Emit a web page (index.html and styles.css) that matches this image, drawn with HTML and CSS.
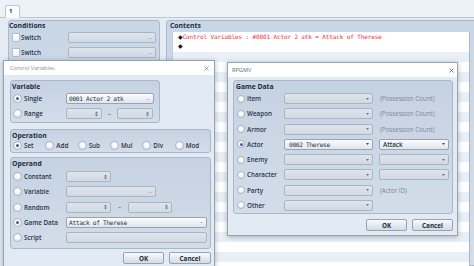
FILE: index.html
```html
<!DOCTYPE html>
<html>
<head>
<meta charset="utf-8">
<link rel="stylesheet" href="styles.css">
</head>
<body>
<div class="tabbar"><div class="tab">1</div></div>
<div class="page">
  <section class="panel conditions">
    <div class="ptitle">Conditions</div>
    <div class="crow"><span class="check"></span><span class="clabel">Switch</span><span class="field w88"><span class="fill"></span><span class="dots">&middot;&middot;&middot;</span></span></div>
    <div class="crow"><span class="check"></span><span class="clabel">Switch</span><span class="field w88"><span class="fill"></span><span class="dots">&middot;&middot;&middot;</span></span></div>
  </section>
  <section class="panel contents">
    <div class="ptitle">Contents</div>
    <div class="list">
      <div class="li"><span class="dia">&#9670;</span><span class="cmd">Control Variables : #0001 Actor 2 atk = Attack of Therese</span></div>
      <div class="li"><span class="dia">&#9670;</span></div>
    </div>
  </section>
</div>

<div class="win cv">
  <div class="wtitle"><span>Control Variables</span><svg class="x" width="5" height="5" viewBox="0 0 5 5"><path d="M0.5 0.5L4.5 4.5M4.5 0.5L0.5 4.5" stroke="#7a8490" stroke-width="0.8"/></svg></div>
  <div class="wbody">
    <div class="grp g-var">
      <div class="gtitle">Variable</div>
      <div class="row"><span class="radio on"></span><span class="lbl">Single</span><span class="field on w88"><span class="mono fill">0001 Actor 2 atk</span><span class="dots">&middot;&middot;&middot;</span></span></div>
      <div class="row"><span class="radio"></span><span class="lbl">Range</span><span class="field spin w36"><span class="fill"></span><svg width="3" height="6" viewBox="0 0 3 6"><path d="M0 2.4L1.5 0.6L3 2.4ZM0 3.6L1.5 5.4L3 3.6Z" fill="#6a7583"/></svg></span><span class="tilde t15">~</span><span class="field spin w36"><span class="fill"></span><svg width="3" height="6" viewBox="0 0 3 6"><path d="M0 2.4L1.5 0.6L3 2.4ZM0 3.6L1.5 5.4L3 3.6Z" fill="#6a7583"/></svg></span></div>
    </div>
    <div class="grp g-op">
      <div class="gtitle">Operation</div>
      <div class="oprow">
        <span class="opt"><span class="radio on"></span>Set</span>
        <span class="opt"><span class="radio"></span>Add</span>
        <span class="opt"><span class="radio"></span>Sub</span>
        <span class="opt"><span class="radio"></span>Mul</span>
        <span class="opt"><span class="radio"></span>Div</span>
        <span class="opt"><span class="radio"></span>Mod</span>
      </div>
    </div>
    <div class="grp g-operand">
      <div class="gtitle t9">Operand</div>
      <div class="row"><span class="radio"></span><span class="lbl">Constant</span><span class="field spin w45"><span class="fill"></span><svg width="3" height="6" viewBox="0 0 3 6"><path d="M0 2.4L1.5 0.6L3 2.4ZM0 3.6L1.5 5.4L3 3.6Z" fill="#6a7583"/></svg></span></div>
      <div class="row"><span class="radio"></span><span class="lbl">Variable</span><span class="field w90"><span class="fill"></span><span class="dots">&middot;&middot;&middot;</span></span></div>
      <div class="row"><span class="radio"></span><span class="lbl">Random</span><span class="field spin w45"><span class="fill"></span><svg width="3" height="6" viewBox="0 0 3 6"><path d="M0 2.4L1.5 0.6L3 2.4ZM0 3.6L1.5 5.4L3 3.6Z" fill="#6a7583"/></svg></span><span class="tilde t17">~</span><span class="field spin w44"><span class="fill"></span><svg width="3" height="6" viewBox="0 0 3 6"><path d="M0 2.4L1.5 0.6L3 2.4ZM0 3.6L1.5 5.4L3 3.6Z" fill="#6a7583"/></svg></span></div>
      <div class="row"><span class="radio on"></span><span class="lbl">Game Data</span><span class="field on w141"><span class="mono fill">Attack of Therese</span><span class="dots">&middot;&middot;&middot;</span></span></div>
      <div class="row"><span class="radio"></span><span class="lbl">Script</span><span class="field w141"><span class="fill"></span></span></div>
    </div>
    <div class="btns"><span class="btn w41">OK</span><span class="btn w42">Cancel</span></div>
  </div>
</div>

<div class="win gd">
  <div class="wtitle"><span>RPGMV</span><svg class="x" width="5" height="5" viewBox="0 0 5 5"><path d="M0.5 0.5L4.5 4.5M4.5 0.5L0.5 4.5" stroke="#555f6b" stroke-width="0.8"/></svg></div>
  <div class="wbody">
    <div class="grp g-gd">
      <div class="gtitle">Game Data</div>
      <div class="row"><span class="radio"></span><span class="lbl l37">Item</span><span class="field combo w89"><span class="fill"></span><svg width="3" height="2" viewBox="0 0 3 2"><path d="M0 0H3L1.5 2Z" fill="#6a7583"/></svg></span><span class="note">(Possession Count)</span></div>
      <div class="row"><span class="radio"></span><span class="lbl l37">Weapon</span><span class="field combo w89"><span class="fill"></span><svg width="3" height="2" viewBox="0 0 3 2"><path d="M0 0H3L1.5 2Z" fill="#6a7583"/></svg></span><span class="note">(Possession Count)</span></div>
      <div class="row"><span class="radio"></span><span class="lbl l37">Armor</span><span class="field combo w89"><span class="fill"></span><svg width="3" height="2" viewBox="0 0 3 2"><path d="M0 0H3L1.5 2Z" fill="#6a7583"/></svg></span><span class="note">(Possession Count)</span></div>
      <div class="row"><span class="radio on"></span><span class="lbl l37">Actor</span><span class="field combo on w89"><span class="mono fill">0002 Therese</span><svg width="3" height="2" viewBox="0 0 3 2"><path d="M0 0H3L1.5 2Z" fill="#3f4956"/></svg></span><span class="field combo on w70 c2"><span class="sel fill">Attack</span><svg width="3" height="2" viewBox="0 0 3 2"><path d="M0 0H3L1.5 2Z" fill="#3f4956"/></svg></span></div>
      <div class="row"><span class="radio"></span><span class="lbl l37">Enemy</span><span class="field combo w89"><span class="fill"></span><svg width="3" height="2" viewBox="0 0 3 2"><path d="M0 0H3L1.5 2Z" fill="#6a7583"/></svg></span><span class="field combo w70 c2"><span class="fill"></span><svg width="3" height="2" viewBox="0 0 3 2"><path d="M0 0H3L1.5 2Z" fill="#6a7583"/></svg></span></div>
      <div class="row"><span class="radio"></span><span class="lbl l37">Character</span><span class="field combo w89"><span class="fill"></span><svg width="3" height="2" viewBox="0 0 3 2"><path d="M0 0H3L1.5 2Z" fill="#6a7583"/></svg></span><span class="field combo w70 c2"><span class="fill"></span><svg width="3" height="2" viewBox="0 0 3 2"><path d="M0 0H3L1.5 2Z" fill="#6a7583"/></svg></span></div>
      <div class="row"><span class="radio"></span><span class="lbl l37">Party</span><span class="field combo w89"><span class="fill"></span><svg width="3" height="2" viewBox="0 0 3 2"><path d="M0 0H3L1.5 2Z" fill="#6a7583"/></svg></span><span class="note">(Actor ID)</span></div>
      <div class="row"><span class="radio"></span><span class="lbl l37">Other</span><span class="field combo w89"><span class="fill"></span><svg width="3" height="2" viewBox="0 0 3 2"><path d="M0 0H3L1.5 2Z" fill="#6a7583"/></svg></span></div>
    </div>
    <div class="btns gdb"><span class="btn w41">OK</span><span class="btn w41">Cancel</span></div>
  </div>
</div>
</body>
</html>
```
FILE: styles.css
```css
* { box-sizing: border-box; }
body {
  margin: 0;
  width: 474px;
  height: 266px;
  overflow: hidden;
  position: relative;
  background: #e6edf4;
  font-family: "Open Sans", "DejaVu Sans", sans-serif;
  color: #27344b;
}
.tabbar {
  height: 18px;
  padding: 5px 0 0 5px;
  border-bottom: 1px solid #b9c6d4;
  background: #edf2f7;
  display: flex;
  align-items: flex-end;
}
.tab {
  width: 15px;
  height: 13px;
  margin-bottom: -1px;
  background: #fafcfd;
  border: 1px solid #b9c6d4;
  border-bottom-color: #fafcfd;
  border-radius: 2px 2px 0 0;
  font-size: 6px;
  font-weight: 700;
  line-height: 10px;
  padding-left: 3px;
}
.page {
  display: flex;
  gap: 6px;
  padding: 2px 0 0 8px;
  height: 248px;
  background: #e4ebf3;
}
.panel {
  background: linear-gradient(#c9d6e5, #d3dde9);
  border: 1px solid #aab9cb;
  border-radius: 3px;
}
.ptitle {
  font-size: 6.8px;
  font-weight: 700;
  height: 9px;
  line-height: 9px;
  color: #1e2b3e;
}
.conditions { width: 152px; }
.conditions .ptitle { padding-left: 0; }
.crow {
  display: flex;
  align-items: center;
  height: 15px;
  padding-left: 3px;
}
.check {
  width: 8px;
  height: 9px;
  background: linear-gradient(#ffffff, #eef1f5);
  border: 1px solid #b2bdc9;
  border-radius: 1px;
  margin-right: 1px;
}
.clabel {
  width: 47px;
  font-size: 6.3px;
  font-weight: 600;
}
.contents {
  flex: 1;
  margin-right: -4px;
  padding-right: 7px;
}
.contents .ptitle { padding-left: 3px; }
.list {
  margin: 2px 0 0 5px;
  height: 240px;
  border-left: 1px solid #c3ceda;
  border-right: 1px solid #aab6c4;
  background: linear-gradient(#ffffff, #ffffff) 0 0 / 100% 20px no-repeat,
              repeating-linear-gradient(to bottom, #e9eff6 0 10px, #ffffff 10px 20px) 0 20px / 100% 100% no-repeat;
}
.li {
  height: 9px;
  display: flex;
  align-items: center;
  padding-left: 5px;
}
.dia {
  font-family: "DejaVu Sans", sans-serif;
  font-size: 6px;
  color: #111;
}
.cmd {
  font-family: "DejaVu Sans Mono", monospace;
  font-size: 6px;
  letter-spacing: -0.12px;
  color: #ec2f3c;
}

/* windows */
.win {
  position: absolute;
  background: #e2eaf3;
  border: 1px solid #97a3b1;
  box-shadow: 0 1px 5px rgba(40, 55, 75, 0.35);
}
.cv { left: 3px; top: 60px; width: 212px; height: 212px; }
.gd { left: 227px; top: 62px; width: 231px; height: 174px; }
.wtitle {
  height: 14px;
  background: #ffffff;
  display: flex;
  align-items: center;
  justify-content: space-between;
  font-size: 5.6px;
  color: #8592a1;
}
.cv .wtitle { padding: 0 5px 0 6px; }
.gd .wtitle { padding: 0 3px 0 4px; color: #5d6875; }
.cv .wbody { padding: 5px 3px 0 6px; }
.gd .wbody { padding: 3px 4px 0 5px; }
.grp {
  background: linear-gradient(#c5d2e2, #d3dde9);
  border: 1px solid #a8b7c9;
  border-radius: 3px;
  padding: 2px 3px 1px 2px;
}
.g-var { width: 150px; }
.g-op { margin-top: 6px; }
.g-operand { margin-top: 4px; padding-bottom: 3px; }
.g-gd { padding: 2px 3px 0 3px; }
.gtitle {
  font-size: 6.8px;
  font-weight: 700;
  height: 8px;
  line-height: 8px;
  margin-left: -1px;
  color: #1e2b3e;
}
.gtitle.t9 { height: 9px; }
.row {
  display: flex;
  align-items: center;
  height: 15px;
}
.g-operand .row, .g-gd .row { height: 15.25px; }
.radio {
  width: 9px;
  height: 9px;
  border-radius: 50%;
  border: 1px solid #aab3be;
  background: radial-gradient(circle at 50% 35%, #ffffff, #e4e9ef);
  margin-right: 2px;
  position: relative;
  flex: none;
}
.g-gd .radio { width: 8px; height: 8px; }
.radio.on::after {
  content: "";
  position: absolute;
  left: 2px;
  top: 2px;
  width: 3px;
  height: 3px;
  border-radius: 50%;
  background: #3c5fa2;
}
.g-gd .radio.on::after { left: 1.5px; top: 1.5px; }
.lbl {
  width: 42px;
  font-size: 6.3px;
  font-weight: 600;
  white-space: nowrap;
}
.lbl.l37 { width: 37px; }
.field {
  height: 11px;
  border: 1px solid #aab5c2;
  border-radius: 2px;
  background: linear-gradient(#dde4ec, #d1d9e3);
  display: flex;
  align-items: center;
  padding: 0 3px 0 2px;
  flex: none;
}
.field.on {
  background: linear-gradient(#fbfcfd, #dfe5ec);
  border-color: #98a4b2;
}
.fill { flex: 1; white-space: nowrap; overflow: hidden; }
.mono {
  font-family: "DejaVu Sans Mono", monospace;
  font-size: 6.2px;
  letter-spacing: -0.32px;
  color: #2a3340;
}
.combo.on .mono { padding-left: 2px; }
.sel { font-size: 6.3px; font-weight: 600; color: #2a3340; padding-left: 1px; }
.dots {
  font-size: 6px;
  letter-spacing: -0.8px;
  color: #6e7885;
  padding-right: 1px;
}
.w36 { width: 36px; }
.w44 { width: 44px; }
.w45 { width: 45px; }
.w88 { width: 88px; }
.w89 { width: 89px; }
.w90 { width: 90px; }
.w70 { width: 70px; }
.w141 { width: 141px; }
.tilde {
  text-align: center;
  font-size: 6px;
  color: #58636f;
}
.t15 { width: 15px; }
.t17 { width: 17px; }
.c2 { margin-left: 6px; }
.note {
  margin-left: 7px;
  font-size: 6.2px;
  color: #7b889a;
  white-space: nowrap;
}
.oprow { display: flex; height: 11px; align-items: center; }
.opt {
  width: 33px;
  display: flex;
  align-items: center;
  font-size: 6.3px;
  font-weight: 600;
}
.btns {
  display: flex;
  justify-content: flex-end;
  gap: 5px;
  margin-top: 3px;
}
.gdb { margin-top: 5px; }
.btn {
  height: 12px;
  border: 1px solid #97a3b2;
  border-radius: 2px;
  background: linear-gradient(#f8fafc, #d4dbe4);
  font-size: 6.3px;
  font-weight: 700;
  display: flex;
  align-items: center;
  justify-content: center;
  color: #1f2a38;
}
.w41 { width: 41px; }
.w42 { width: 42px; }
```
